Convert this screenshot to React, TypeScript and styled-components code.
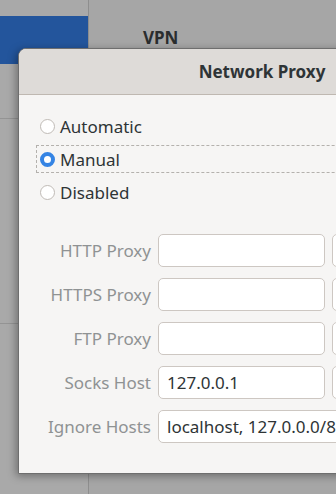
import { Fragment } from "react";
import styled, { createGlobalStyle } from "styled-components";

const GlobalStyle = createGlobalStyle`
  html, body {
    margin: 0;
    padding: 0;
    overflow: hidden;
  }
  body {
    font-family: "Noto Sans", "Open Sans", sans-serif;
    color: #2e3436;
  }
`;

type ProxyMode = "automatic" | "manual" | "disabled";

const MODES: { id: ProxyMode; label: string }[] = [
  { id: "automatic", label: "Automatic" },
  { id: "manual", label: "Manual" },
  { id: "disabled", label: "Disabled" },
];

const FIELDS: { label: string; value: string; wide?: boolean }[] = [
  { label: "HTTP Proxy", value: "" },
  { label: "HTTPS Proxy", value: "" },
  { label: "FTP Proxy", value: "" },
  { label: "Socks Host", value: "127.0.0.1" },
  { label: "Ignore Hosts", value: "localhost, 127.0.0.0/8, ::1", wide: true },
];

const Screen = styled.div`
  position: relative;
  width: 336px;
  height: 494px;
  overflow: hidden;
  display: flex;
  background: #a6a6a6;
`;

const Sidebar = styled.div`
  width: 88px;
  flex-shrink: 0;
  border-right: 1px solid #8e8e8e;
  background: #a9a9a9;
  display: flex;
  flex-direction: column;
`;

const SidebarTop = styled.div`
  height: 16px;
`;

const SidebarRow = styled.div<{ $selected?: boolean; $h: number }>`
  height: ${(p) => p.$h}px;
  background: ${(p) => (p.$selected ? "#23559c" : "transparent")};
  border-bottom: ${(p) => (p.$selected ? "none" : "1px solid #949494")};
`;

const Content = styled.div`
  flex: 1;
  padding: 26px 0 0 54px;
`;

const Heading = styled.div`
  font-size: 17px;
  font-weight: 700;
  color: #2a2d2e;
`;

const Dialog = styled.div`
  position: absolute;
  left: 18px;
  top: 48px;
  width: 488px;
  height: 426px;
  box-sizing: border-box;
  border: 1px solid #6e6e6e;
  border-radius: 8px 8px 0 0;
  background: #f6f5f4;
  box-shadow: -2px 2px 8px rgba(0, 0, 0, 0.35);
  display: flex;
  flex-direction: column;
  overflow: hidden;
`;

const Header = styled.div`
  height: 45px;
  flex-shrink: 0;
  background: #dedbd8;
  border-bottom: 1px solid #bfb8b1;
  display: flex;
  align-items: center;
  justify-content: center;
  font-size: 17px;
  font-weight: 700;
  color: #2e3436;
`;

const Body = styled.div`
  padding: 17px 0 0 17px;
  display: flex;
  flex-direction: column;
`;

const RadioList = styled.div`
  display: flex;
  flex-direction: column;
  gap: 5px;
`;

const RadioRow = styled.div<{ $focused?: boolean }>`
  height: 28px;
  box-sizing: border-box;
  display: flex;
  align-items: center;
  gap: 5px;
  padding-left: 3px;
  border: 1px dashed ${(p) => (p.$focused ? "#b4b1ad" : "transparent")};
  font-size: 17px;
  color: #2e3436;
`;

const RadioDot = styled.span<{ $checked?: boolean }>`
  width: 15px;
  height: 15px;
  box-sizing: border-box;
  border-radius: 50%;
  flex-shrink: 0;
  background: #fff;
  border: ${(p) => (p.$checked ? "4px solid #3584e4" : "1px solid #c0bbb6")};
`;

const Form = styled.div`
  margin-top: 28px;
  margin-left: -17px;
  display: grid;
  grid-template-columns: 132px 167px 167px;
  column-gap: 7px;
  row-gap: 11px;
  align-items: center;
`;

const FieldLabel = styled.div`
  text-align: right;
  font-size: 17px;
  color: #8f9293;
  white-space: nowrap;
`;

const Input = styled.div<{ $wide?: boolean }>`
  grid-column: ${(p) => (p.$wide ? "span 2" : "auto")};
  height: 33px;
  box-sizing: border-box;
  border: 1px solid #cdc7c2;
  border-radius: 5px;
  background: #fff;
  padding: 0 8px;
  display: flex;
  align-items: center;
  font-size: 17px;
  color: #2e3436;
  white-space: nowrap;
  overflow: hidden;
`;

export default function App() {
  const mode: ProxyMode = "manual";
  return (
    <>
      <GlobalStyle />
      <Screen>
        <Sidebar>
          <SidebarTop />
          <SidebarRow $selected $h={48} />
          <SidebarRow $h={54} />
          <SidebarRow $h={204} />
        </Sidebar>
        <Content>
          <Heading>VPN</Heading>
        </Content>
        <Dialog>
          <Header>Network Proxy</Header>
          <Body>
            <RadioList>
              {MODES.map((m) => (
                <RadioRow key={m.id} $focused={m.id === mode}>
                  <RadioDot $checked={m.id === mode} />
                  {m.label}
                </RadioRow>
              ))}
            </RadioList>
            <Form>
              {FIELDS.map((f) => (
                <Fragment key={f.label}>
                  <FieldLabel>{f.label}</FieldLabel>
                  <Input $wide={f.wide}>{f.value}</Input>
                  {!f.wide && <Input />}
                </Fragment>
              ))}
            </Form>
          </Body>
        </Dialog>
      </Screen>
    </>
  );
}
